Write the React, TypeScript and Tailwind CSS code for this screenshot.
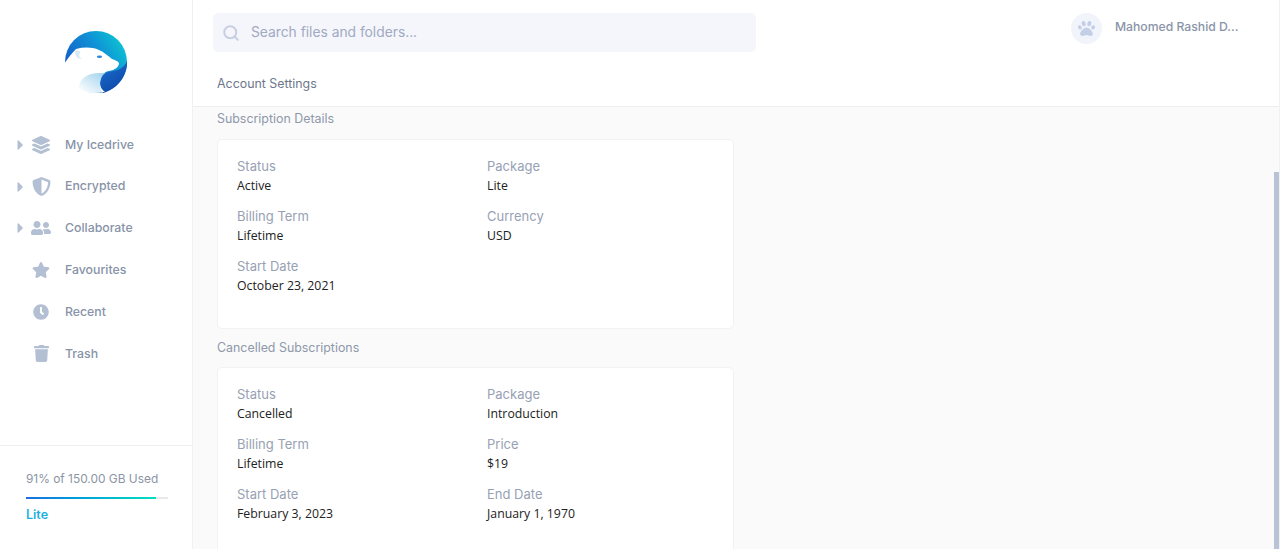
import { FaLayerGroup, FaShieldAlt, FaUserFriends, FaStar, FaClock, FaTrash, FaPaw, FaCaretRight } from "react-icons/fa";
import { Search } from "lucide-react";
import type { ComponentType } from "react";

const nav: { label: string; Icon: ComponentType<{ className?: string }>; caret?: boolean; size: string }[] = [
  { label: "My Icedrive", Icon: FaLayerGroup, caret: true, size: "w-[18px] h-[18px]" },
  { label: "Encrypted", Icon: FaShieldAlt, caret: true, size: "w-[19px] h-[19px]" },
  { label: "Collaborate", Icon: FaUserFriends, caret: true, size: "w-[20px] h-[20px]" },
  { label: "Favourites", Icon: FaStar, size: "w-[18px] h-[18px]" },
  { label: "Recent", Icon: FaClock, size: "w-[16px] h-[16px]" },
  { label: "Trash", Icon: FaTrash, size: "w-[15px] h-[17px]" },
];

function Logo() {
  return (
    <svg width="64" height="62" viewBox="64 30 64 62" className="block">
      <defs>
        <linearGradient id="lg1" x1="1" y1="0" x2="0.1" y2="0.6">
          <stop offset="0" stopColor="#0bd6d0" />
          <stop offset="0.5" stopColor="#0f93d6" />
          <stop offset="1" stopColor="#1560c8" />
        </linearGradient>
        <linearGradient id="lg2" x1="0.9" y1="0.1" x2="0.1" y2="1">
          <stop offset="0" stopColor="#a9d6ef" />
          <stop offset="1" stopColor="#ffffff" />
        </linearGradient>
        <linearGradient id="lg3" x1="0" y1="0" x2="0.6" y2="1">
          <stop offset="0" stopColor="#1a73d2" />
          <stop offset="1" stopColor="#0f47a8" />
        </linearGradient>
      </defs>
      <circle cx="96" cy="61" r="31" fill="url(#lg1)" />
      <path d="M103 92 C98 84 100 74 108 71 C116 70 124 68 127 60 C128 74 118 88 103 92 Z" fill="url(#lg3)" />
      <path d="M64 63 C68 57 72 52 76 48 C84 46 92 46 99 49 C104 51 108 55 112 58 C115 59 118 60 119 62 C119 66 115 69 109 70 C103 71 100 76 100 82 C100 86 102 89 105 91 L64 93 Z" fill="#fff" />
      <path d="M79 87 C79 78 87 72 100 72 C103 72 104 72 105 72 C101 75 100 80 100 84 C100 87 101 89 102 91 C94 93 85 92 79 87 Z" fill="url(#lg2)" />
      <path d="M75 50 C79 49 81 50 80 52 C78 55 80 57 82 58 C78 58 75 56 75 50 Z" fill="#d8e9f6" />
      <ellipse cx="99.5" cy="55.8" rx="2.6" ry="1.2" fill="#2a86e0" />
    </svg>
  );
}

function Field({ label, value }: { label: string; value: string }) {
  return (
    <div className="h-[50px]">
      <div className="h-[20px] text-[13px] leading-[18px] text-[#97a1b3]">{label}</div>
      <div className="h-[18px] font-['Open_Sans',sans-serif] text-[12.3px] leading-[18px] text-[#222]">{value}</div>
    </div>
  );
}

function Card({ fields }: { fields: [string, string][] }) {
  return (
    <div className="h-[190px] w-[517px] shrink-0 rounded-[5px] border border-[#f1f2f4] bg-white pl-[19px] pt-[17px]">
      <div className="grid grid-cols-[250px_1fr]">
        {fields.map(([l, v]) => (
          <Field key={l} label={l} value={v} />
        ))}
      </div>
    </div>
  );
}

export default function App() {
  return (
    <div className="relative flex h-[549px] w-[1280px] overflow-hidden bg-white font-['Inter',sans-serif]">
      <aside className="flex h-full w-[193px] shrink-0 flex-col border-r border-[#eff0f2] bg-white">
        <div className="flex h-[124px] shrink-0 justify-center pt-[31px]">
          <Logo />
        </div>
        <nav className="flex flex-col">
          {nav.map(({ label, Icon, caret, size }) => (
            <div key={label} className="flex h-[41.8px] items-center">
              <div className="flex w-[32px] justify-start pl-[15px]">
                {caret && <FaCaretRight className="h-[16px] w-[11px] text-[#b3bfd3]" />}
              </div>
              <div className="flex w-[18px] justify-center">
                <Icon className={`${size} shrink-0 text-[#b3bfd3]`} />
              </div>
              <span className="ml-[15px] text-[12.3px] font-medium text-[#8793a8]">{label}</span>
            </div>
          ))}
        </nav>
        <div className="mt-auto h-[104px] border-t border-[#eff0f2] pl-[26px] pt-[24px]">
          <div className="text-[11.9px] leading-[18px] font-normal text-[#8b95a5]">91% of 150.00 GB Used</div>
          <div className="mt-[9px] h-[2px] w-[142px] bg-[#e9e9e9]">
            <div className="h-full w-[130px] bg-gradient-to-r from-[#1c6fe0] to-[#05e0c0]" />
          </div>
          <div className="mt-[7px] text-[12.5px] leading-[18px] font-semibold text-[#1cb0e0]">Lite</div>
        </div>
      </aside>

      <div className="flex h-full min-w-0 flex-1 flex-col">
        <header className="h-[107px] shrink-0 border-b border-[#eceef0] bg-white">
          <div className="flex items-start justify-between">
            <div className="ml-[20px] mt-[13px] flex h-[39px] w-[543px] items-center rounded-[5px] bg-[#f4f6fb] pl-[9px]">
              <Search className="h-[18px] w-[18px] text-[#c7cfe0]" strokeWidth={2.6} />
              <span className="ml-[11px] pb-[2px] text-[13.8px] leading-[18px] text-[#a2a9c2]">Search files and folders...</span>
            </div>
            <div className="mr-[40px] mt-[13px] flex w-[169px] items-start">
              <div className="flex h-[31px] w-[31px] items-center justify-center rounded-full bg-[#f2f4fb]">
                <FaPaw className="h-[17px] w-[17px] text-[#c3cfe6]" />
              </div>
              <span className="ml-[13px] mt-[5px] whitespace-nowrap text-[12.2px] leading-[18px] font-medium text-[#8a94a8]">Mahomed Rashid D...</span>
            </div>
          </div>
          <div className="ml-[24px] mt-[23px] text-[12.4px] leading-[18px] text-[#6e778a]">Account Settings</div>
        </header>
        <main className="flex min-h-0 flex-1 flex-col overflow-hidden bg-[#fafafa] pl-[24px] pt-[3px]">
          <div className="mb-[11px] h-[18px] text-[12.4px] leading-[18px] text-[#8e98aa]">Subscription Details</div>
          <Card
            fields={[
              ["Status", "Active"],
              ["Package", "Lite"],
              ["Billing Term", "Lifetime"],
              ["Currency", "USD"],
              ["Start Date", "October 23, 2021"],
            ]}
          />
          <div className="mb-[10px] mt-[10px] h-[18px] shrink-0 text-[12.4px] leading-[18px] text-[#8e98aa]">Cancelled Subscriptions</div>
          <Card
            fields={[
              ["Status", "Cancelled"],
              ["Package", "Introduction"],
              ["Billing Term", "Lifetime"],
              ["Price", "$19"],
              ["Start Date", "February 3, 2023"],
              ["End Date", "January 1, 1970"],
            ]}
          />
        </main>
      </div>
      <div className="absolute right-0 top-0 h-full w-[1px] bg-[#f1f1f1]" />
      <div className="absolute right-[1px] top-[172px] h-[377px] w-[5px] bg-[#b9c3d6]" />
    </div>
  );
}
